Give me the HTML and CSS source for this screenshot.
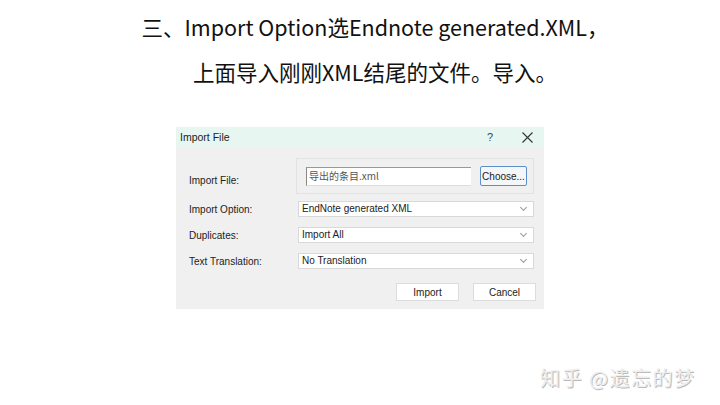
FILE: index.html
```html
<!DOCTYPE html>
<html lang="en">
<head>
  <meta charset="UTF-8" />
  <title>Import File</title>
  <link rel="stylesheet" href="styles.css">
</head>
<body>
  <header class="caption">
    <p>三、Import Option选Endnote generated.XML，</p>
    <p>上面导入刚刚XML结尾的文件。导入。</p>
  </header>

  <main class="dialog">
    <div class="titlebar">
      <span class="title">Import File</span>
      <span class="help">?</span>
      <span class="close">
        <svg width="11" height="11" viewBox="0 0 11 11"><path d="M0.5 0.5L10.5 10.5M10.5 0.5L0.5 10.5" stroke="#333" stroke-width="1.1" fill="none"/></svg>
      </span>
    </div>

    <div class="body">
      <div class="row file-row">
        <span class="label">Import File:</span>
        <div class="filebox">
          <div class="filename">导出的条目.xml</div>
          <button class="choose">Choose...</button>
        </div>
      </div>

      <div class="row">
        <span class="label">Import Option:</span>
        <div class="select">EndNote generated XML<span class="chev"></span></div>
      </div>
      <div class="row">
        <span class="label">Duplicates:</span>
        <div class="select">Import All<span class="chev"></span></div>
      </div>
      <div class="row">
        <span class="label">Text Translation:</span>
        <div class="select">No Translation<span class="chev"></span></div>
      </div>

      <div class="actions">
        <button class="btn">Import</button>
        <button class="btn">Cancel</button>
      </div>
    </div>
  </main>

  <footer class="mark">知乎 @遗忘的梦</footer>
</body>
</html>
```

FILE: styles.css
```css
body {
  margin: 0;
  width: 720px;
  height: 405px;
  background: #fff;
  font-family: "Noto Sans CJK SC", "Noto Sans", sans-serif;
  position: relative;
  overflow: hidden;
}

.caption {
  text-align: center;
  color: #111;
  font-size: 21.5px;
  padding: 4px 0 0 30px;
}

.caption p {
  margin: 0;
  line-height: 45px;
}

.dialog {
  width: 368px;
  margin: 33px 0 0 176px;
  background: #f0f0f0;
  font-family: "Liberation Sans", "Noto Sans CJK SC", sans-serif;
  font-size: 10px;
  color: #222;
}

.titlebar {
  height: 20px;
  background: #e8f6f1;
  display: flex;
  align-items: center;
  padding: 0 11px 0 4px;
}

.title {
  flex: 1;
  font-size: 10.5px;
}

.help {
  width: 22px;
  font-size: 11px;
  color: #444;
}

.close {
  width: 11px;
  height: 11px;
  margin-left: 13px;
  display: flex;
}

.body {
  padding: 11px 10px 8px 13px;
}

.row {
  display: flex;
  align-items: center;
  margin-bottom: 10px;
}

.label {
  width: 109px;
}

.file-row {
  margin-bottom: 7px;
}

.file-row .label {
  width: 108px;
  padding-top: 9px;
}

.filebox {
  flex: 1;
  height: 34px;
  border: 1px solid #e2e2e2;
  display: flex;
  align-items: center;
  padding: 0 6px 0 9px;
  gap: 9px;
}

.filename {
  width: 162px;
  height: 17px;
  background: #fff;
  border-left: 1px solid #888;
  border-top: 1px solid #999;
  border-bottom: 1px solid #ddd;
  font-family: "Noto Sans CJK SC", serif;
  font-size: 10px;
  line-height: 16px;
  padding-left: 2px;
  color: #555;
}

.choose {
  height: 20px;
  width: 47px;
  padding: 0;
  background: #f4f6f8;
  border: 1px solid #5c8fcb;
  border-radius: 2px;
  font-family: "Liberation Sans", sans-serif;
  font-size: 10px;
  color: #222;
}

.select {
  flex: 1;
  height: 14px;
  background: #fff;
  border: 1px solid #d8d8d8;
  padding: 0 4px 0 3px;
  display: flex;
  align-items: center;
  justify-content: space-between;
  line-height: 14px;
}

.chev {
  width: 4px;
  height: 4px;
  border-right: 1px solid #999;
  border-bottom: 1px solid #999;
  transform: rotate(45deg);
  margin: 0 3px 3px 0;
}

.actions {
  display: flex;
  justify-content: flex-end;
  gap: 14px;
  padding-top: 4px;
  margin-right: -2px;
}

.btn {
  width: 63px;
  height: 18px;
  padding: 0;
  background: #fff;
  border: 1px solid #dcdcdc;
  font-family: "Liberation Sans", sans-serif;
  font-size: 10px;
  color: #222;
}

.mark {
  position: absolute;
  left: 540px;
  top: 363px;
  font-size: 20px;
  color: #eee;
  letter-spacing: 1.5px;
  text-shadow: 1px 1px 0 #bbb;
}
```
